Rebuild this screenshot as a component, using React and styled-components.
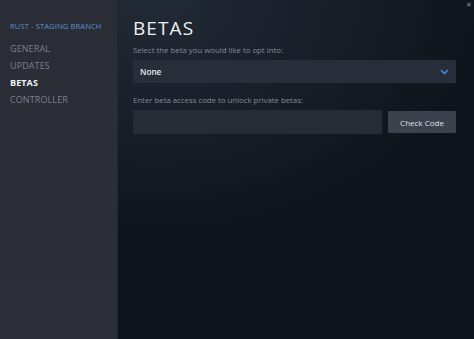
import React from "react";
import styled, { createGlobalStyle } from "styled-components";

const Global = createGlobalStyle`
  html, body { margin: 0; padding: 0; background: #0e141b; }
  body { font-family: "Open Sans", "Noto Sans", Arial, sans-serif; }
  * { box-sizing: border-box; }
`;

const Window = styled.div`
  width: 474px;
  height: 339px;
  display: flex;
  overflow: hidden;
  position: relative;
`;

const Sidebar = styled.nav`
  width: 118px;
  flex: none;
  background: linear-gradient(180deg, #2a2d36 0%, #2c2f38 100%);
  border-right: 1px solid #24272e;
  padding: 20px 0 0 10px;
  display: flex;
  flex-direction: column;
`;

const GameTitle = styled.div`
  font-size: 7.6px;
  color: #5b8fd0;
  text-transform: uppercase;
  letter-spacing: 0.1px;
  height: 12px;
  line-height: 12px;
  margin-bottom: 8px;
`;

const NavItem = styled.div`
  font-size: 9px;
  line-height: 17px;
  color: ${(p) => (p.$active ? "#f1f3f5" : "#7c8089")};
  font-weight: ${(p) => (p.$active ? 700 : 400)};
  text-transform: uppercase;
  letter-spacing: 0.1px;
`;

const Main = styled.main`
  flex: 1;
  background: radial-gradient(ellipse 120% 90% at 10% 0%, #222a36 0%, #161d27 45%, #0e141b 80%);
  padding: 17px 18px 0 15px;
  display: flex;
  flex-direction: column;
`;

const Close = styled.div`
  position: absolute;
  top: 1px;
  right: 2px;
  font-size: 7px;
  color: #8b9097;
  line-height: 8px;
`;

const Title = styled.h1`
  margin: 0;
  font-size: 19px;
  font-weight: 400;
  letter-spacing: 1.1px;
  color: #eef0f2;
  line-height: 22px;
`;

const Label = styled.div`
  font-size: 7.8px;
  color: #858b93;
  margin-top: ${(p) => p.$mt}px;
  line-height: 11px;
`;

const Select = styled.div`
  margin-top: 4px;
  height: 23px;
  background: #282e39;
  display: flex;
  align-items: center;
  justify-content: space-between;
  padding: 0 7px;
  color: #e6e8ea;
  font-size: 8.2px;
  font-weight: 600;
`;

const Row = styled.div`
  margin-top: 4px;
  display: flex;
  gap: 6px;
  align-items: center;
`;

const Input = styled.div`
  flex: 1;
  height: 24px;
  background: #262b35;
`;

const Button = styled.div`
  width: 68px;
  height: 22px;
  background: #3b424e;
  color: #dde1e5;
  font-size: 8px;
  display: flex;
  align-items: center;
  justify-content: center;
  border-radius: 1px;
`;

export default function App() {
  return (
    <>
      <Global />
      <Window>
        <Sidebar>
          <GameTitle>Rust - Staging Branch</GameTitle>
          <NavItem>General</NavItem>
          <NavItem>Updates</NavItem>
          <NavItem $active>Betas</NavItem>
          <NavItem>Controller</NavItem>
        </Sidebar>
        <Main>
          <Title>BETAS</Title>
          <Label $mt={6}>Select the beta you would like to opt into:</Label>
          <Select>
            <span>None</span>
            <svg width="9" height="6" viewBox="0 0 9 6">
              <path d="M1 1 L4.5 4.5 L8 1" fill="none" stroke="#2f8fe0" strokeWidth="1.6" />
            </svg>
          </Select>
          <Label $mt={12}>Enter beta access code to unlock private betas:</Label>
          <Row>
            <Input />
            <Button>Check Code</Button>
          </Row>
        </Main>
        <Close>✕</Close>
      </Window>
    </>
  );
}
